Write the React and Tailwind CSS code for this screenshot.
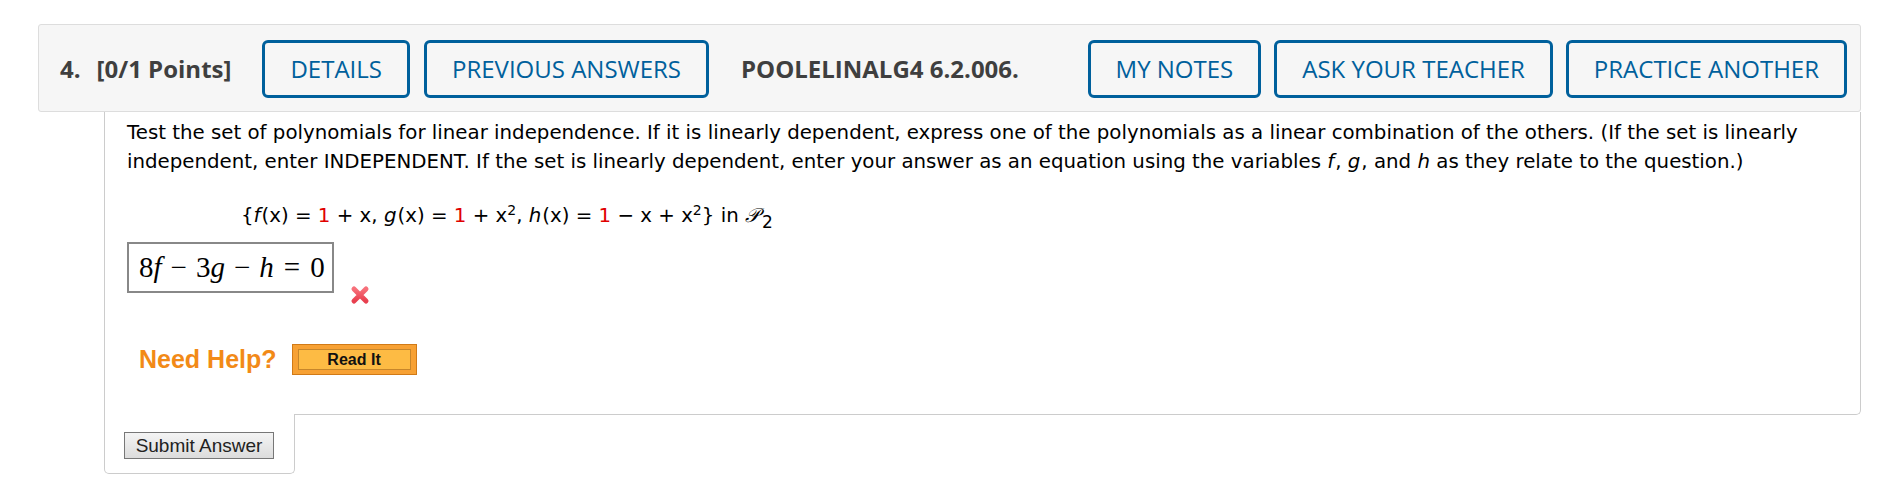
import React from "react";

const HeaderButton = ({ label }) => (
  <button className="h-[58px] px-[25px] border-[3px] border-[#00609c] rounded-[6px] text-[#00609c] text-[24px] leading-none font-normal flex items-center">
    {label}
  </button>
);

const Red = ({ children }) => <span className="text-[#e00000]">{children}</span>;

const WrongMark = () => (
  <svg width="20" height="20" viewBox="0 0 20 20" className="mt-[43px] shrink-0">
    <defs>
      <linearGradient id="xg" x1="0" y1="0" x2="0" y2="1">
        <stop offset="0" stopColor="#f7707a" />
        <stop offset="1" stopColor="#e83f4f" />
      </linearGradient>
    </defs>
    <path d="M4 4 L16 16 M16 4 L4 16" stroke="url(#xg)" strokeWidth="5" strokeLinecap="round" />
  </svg>
);

export default function App() {
  return (
    <div className="w-full h-[478px] bg-white pt-[24px] pl-[38px] pr-[17px]">
      {/* question header */}
      <div className="h-[88px] bg-[#f6f6f6] border border-[#dddddd] rounded-[3px] flex items-center pl-[21px] pr-[13px] pt-[2px] font-['Open_Sans',sans-serif]">
        <span className="text-[24px] font-bold text-[#3f3f3f] mr-[16px]">4.</span>
        <span className="text-[24px] font-bold text-[#3f3f3f] mr-[31px]">[0/1 Points]</span>
        <div className="flex gap-[14px] mr-[32px]">
          <HeaderButton label="DETAILS" />
          <HeaderButton label="PREVIOUS ANSWERS" />
        </div>
        <span className="text-[24px] font-bold text-[#3f3f3f]">POOLELINALG4 6.2.006.</span>
        <div className="ml-auto flex gap-[13px]">
          <HeaderButton label="MY NOTES" />
          <HeaderButton label="ASK YOUR TEACHER" />
          <HeaderButton label="PRACTICE ANOTHER" />
        </div>
      </div>

      {/* question body */}
      <div className="ml-[66px] border-x border-b border-[#cccccc] rounded-br-[5px] pl-[22px] pr-[23px] pt-[6px] pb-[39px] font-['DejaVu_Sans',sans-serif] text-[19.8px] leading-[29px] text-black">
        <p>
          Test the set of polynomials for linear independence. If it is linearly dependent, express one of the polynomials as a linear combination of the others. (If the set is linearly independent, enter INDEPENDENT. If the set is linearly dependent, enter your answer as an equation using the variables <i className="pr-px">f</i>, <i className="pr-px">g</i>, and <i>h</i> as they relate to the question.)
        </p>
        <p className="mt-[25px] ml-[114px] whitespace-nowrap">
          {"{"}<i className="pr-px">f</i>(x) = <Red>1</Red> + x, <i className="pr-px">g</i>(x) = <Red>1</Red> + x<sup className="text-[14px]">2</sup>, <i className="pr-px">h</i>(x) = <Red>1</Red> − x + x<sup className="text-[14px]">2</sup>{"}"} in <span className="font-['Liberation_Serif',serif] italic pr-[3px]">𝒫</span><sub className="text-[17px] relative top-[6px]">2</sub>
        </p>

        <div className="mt-[12px] h-[51px] flex items-start gap-[16px]">
          <div className="w-[207px] h-[51px] border-2 border-[#888888] flex items-center pl-[10px] font-['Liberation_Serif',serif] text-[29px] leading-none whitespace-nowrap">
            8<i>f</i>
            <span className="mx-[9px]">−</span>3<i>g</i>
            <span className="mx-[9px]">−</span>
            <i>h</i>
            <span className="mx-[10px]">=</span>0
          </div>
          <WrongMark />
        </div>

        <div className="mt-[51px] ml-[12px] flex items-center gap-[15px] font-['Liberation_Sans',sans-serif]">
          <span className="text-[25px] font-bold text-[#f28a17] leading-none">Need Help?</span>
          <div className="w-[125px] h-[31px] bg-[#f7a134] border border-[#d17a17] px-[5px] py-[4px]">
            <div className="w-full h-full bg-[#fdbb44] border border-[#c7862a] flex items-center justify-center text-[16px] font-bold text-[#111111] leading-none">
              Read It
            </div>
          </div>
        </div>
      </div>

      {/* submit tab */}
      <div className="ml-[66px] -mt-px relative w-[191px] h-[60px] bg-white border-x border-b border-[#cccccc] rounded-b-[5px] pl-[19px] pt-[18px]">
        <button className="w-[150px] h-[27px] border border-[#777777] bg-gradient-to-b from-[#f4f4f4] to-[#dcdcdc] font-['Liberation_Sans',sans-serif] text-[19px] leading-none text-[#222222]">
          Submit Answer
        </button>
      </div>
    </div>
  );
}
